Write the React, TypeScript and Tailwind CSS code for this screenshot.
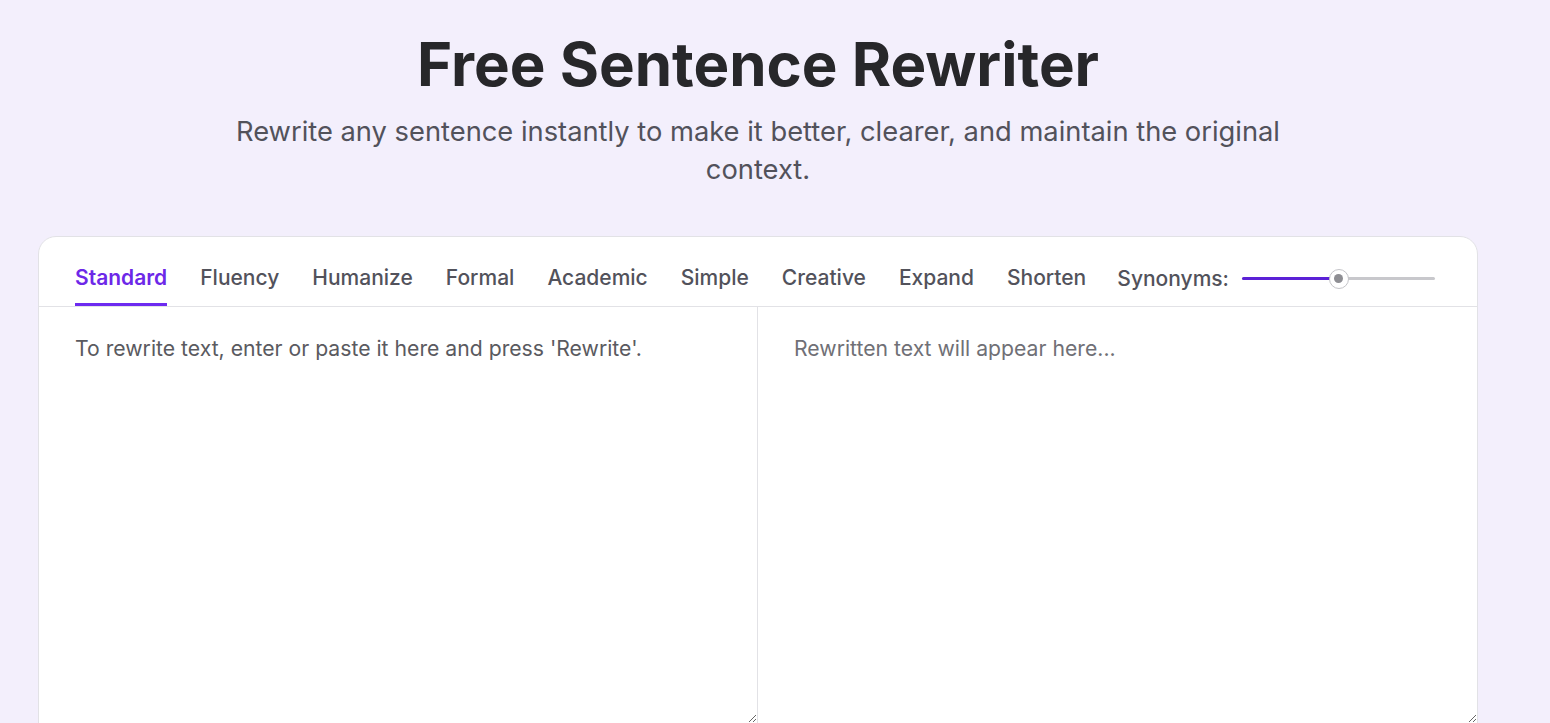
import { useState } from 'react';

const modes = [
  'Standard',
  'Fluency',
  'Humanize',
  'Formal',
  'Academic',
  'Simple',
  'Creative',
  'Expand',
  'Shorten',
];

function SynonymSlider({ value }: { value: number }) {
  return (
    <div className="flex items-center gap-[13px] pb-[3px]">
      <span className="text-[21px] font-medium text-[#52525b]">Synonyms:</span>
      <div className="relative h-[20px] w-[193px]">
        <div className="absolute left-0 right-0 top-[8.5px] h-[3px] rounded-full bg-[#c8c8cc]" />
        <div
          className="absolute left-0 top-[8.5px] h-[3px] rounded-full bg-[#5b21d6]"
          style={{ width: `${value}%` }}
        />
        <div
          className="absolute top-0 flex h-[20px] w-[20px] -translate-x-1/2 items-center justify-center rounded-full border border-[#c4c4c8] bg-white"
          style={{ left: `${value}%` }}
        >
          <div className="h-[9px] w-[9px] rounded-full bg-[#8e8e93]" />
        </div>
      </div>
    </div>
  );
}

export default function App() {
  const [mode, setMode] = useState('Standard');

  return (
    <div className="min-h-screen bg-[#f3effc] font-['Inter','Liberation_Sans',sans-serif]">
      <div className="w-[1516px] px-[38px] pt-[26px]">
        <h1 className="text-center text-[60px] font-bold leading-[76px] text-[#27272a]">
          Free Sentence Rewriter
        </h1>
        <p className="mx-auto mt-[11px] max-w-[1080px] text-center text-[27.3px] leading-[38px] text-[#52525b]">
          Rewrite any sentence instantly to make it better, clearer, and maintain the original
          context.
        </p>

        <div className="mt-[47px] overflow-hidden rounded-[18px] border border-[#e2e2e6] bg-white">
          <div className="flex h-[70px] items-stretch justify-between border-b border-[#e2e2e6] pl-[36px] pr-[42px] pt-[17px]">
            <div className="flex items-stretch gap-[33px]">
              {modes.map((m) => (
                <button
                  key={m}
                  type="button"
                  onClick={() => setMode(m)}
                  className={`border-b-[3px] pb-[1px] text-[21px] ${
                    mode === m
                      ? 'border-[#6d2af0] font-semibold text-[#6d28e8]'
                      : 'border-transparent font-medium text-[#52525b]'
                  }`}
                >
                  {m}
                </button>
              ))}
            </div>
            <SynonymSlider value={50} />
          </div>

          <div className="grid grid-cols-2">
            <textarea
              className="h-[416px] border-r border-[#e2e2e6] px-[36px] py-[27px] text-[21.2px] leading-[28px] text-[#27272a] outline-none placeholder:text-[#5a5a60]"
              placeholder="To rewrite text, enter or paste it here and press 'Rewrite'."
            />
            <textarea
              className="h-[416px] px-[36px] py-[27px] text-[21.2px] leading-[28px] text-[#27272a] outline-none placeholder:text-[#707076]"
              placeholder="Rewritten text will appear here..."
              readOnly
            />
          </div>
          <div className="h-[64px] border-t border-[#e2e2e6]" />
        </div>
      </div>
    </div>
  );
}
